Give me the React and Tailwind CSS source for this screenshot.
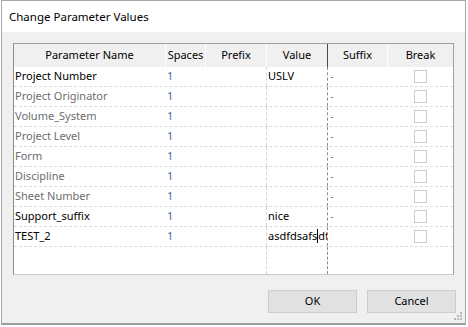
const rows = [
    { name: 'Project Number', active: true, value: 'USLV', suffix: '-' },
    { name: 'Project Originator', active: false, value: '', suffix: '-' },
    { name: 'Volume_System', active: false, value: '', suffix: '-' },
    { name: 'Project Level', active: false, value: '', suffix: '-' },
    { name: 'Form', active: false, value: '', suffix: '-' },
    { name: 'Discipline', active: false, value: '', suffix: '-' },
    { name: 'Sheet Number', active: false, value: '', suffix: '-' },
    { name: 'Support_suffix', active: true, value: 'nice', suffix: '-' },
    { name: 'TEST_2', active: true, value: 'asdfdsafs', tail: 'df', suffix: '', editing: true },
];

const cols = 'grid grid-cols-[152px_40px_61px_61px_60px_65px]';

const ResizeGrip = () => (
    <svg width="8" height="8" viewBox="0 0 8 8" className="absolute right-[3px] bottom-[3px]">
        {[[6, 0], [6, 3], [3, 3], [6, 6], [3, 6], [0, 6]].map(([x, y]) => (
            <rect key={`${x}-${y}`} x={x} y={y} width="2" height="2" fill="#b8b8b8" />
        ))}
    </svg>
);

const App = () => {
    return (
        <div className="w-[468px] h-[327px] bg-white font-['Noto_Sans',sans-serif] text-[11px] text-black overflow-hidden">
            <div className="relative ml-px w-[465px] h-[325px] border border-[#a8a8a8] border-b-2 border-b-[#9c9c9c] flex flex-col bg-[#f0f0f0]">
                {/* title bar */}
                <div className="h-[31px] bg-white flex items-center pl-[7px] text-[11.5px] shrink-0">
                    Change Parameter Values
                </div>

                {/* grid */}
                <div className="ml-[11px] mt-[11px] w-[441px] h-[232px] border-l border-t border-r border-l-[#8c8c8c] border-t-[#a0a0a0] border-r-[#a0a0a0] border-b border-b-dashed border-b-[#c8c8c8] bg-white flex flex-col">
                    <div className={`${cols} h-[23px] bg-[#f0f0f0] shrink-0`}>
                        <div className="border-r border-white flex items-center justify-center">Parameter Name</div>
                        <div className="border-r border-white flex items-center justify-center">Spaces</div>
                        <div className="border-r border-white flex items-center justify-center">Prefix</div>
                        <div className="border-r border-[#4a4a4a] flex items-center justify-center">Value</div>
                        <div className="border-r border-white flex items-center justify-center">Suffix</div>
                        <div className="flex items-center justify-center">Break</div>
                    </div>

                    {rows.map((row) => (
                        <div key={row.name} className={`${cols} h-[20px] shrink-0 border-b border-dashed border-[#dcdcdc]`}>
                            <div className={`pl-[1px] pb-[1px] flex items-center ${row.active ? 'text-black' : 'text-[#6d6d6d]'}`}>{row.name}</div>
                            <div className="pl-px pb-[1px] flex items-center text-[#3f6aa3]">1</div>
                            <div className="border-r border-dashed border-[#d4d4d4]" />
                            <div className="pl-[1px] pb-[1px] flex items-center border-r border-dashed border-[#8a8a8a] overflow-hidden whitespace-nowrap">
                                {row.value}
                                {row.editing && <span className="inline-block shrink-0 w-px h-[14px] bg-black" />}
                                {row.tail}
                            </div>
                            <div className="pl-[2px] pb-[1px] flex items-center text-[#808080]">{row.suffix}</div>
                            <div className="flex items-start justify-center pt-[3px]">
                                <span className="block w-[13px] h-[13px] border border-[#cccccc] bg-white" />
                            </div>
                        </div>
                    ))}

                    <div className={`${cols} flex-1`}>
                        <div />
                        <div />
                        <div className="border-r border-dashed border-[#d4d4d4]" />
                        <div className="border-r border-dashed border-[#8a8a8a]" />
                        <div />
                        <div />
                    </div>
                </div>

                {/* buttons */}
                <div className="flex justify-end gap-[10px] mt-[15px] pr-[9px]">
                    <button type="button" className="w-[89px] h-[23px] bg-[#e1e1e1] border border-[#cdcdcd] text-black">OK</button>
                    <button type="button" className="w-[89px] h-[23px] bg-[#e1e1e1] border border-[#cdcdcd] text-black">Cancel</button>
                </div>

                <ResizeGrip />
            </div>
        </div>
    );
};

export default App;
